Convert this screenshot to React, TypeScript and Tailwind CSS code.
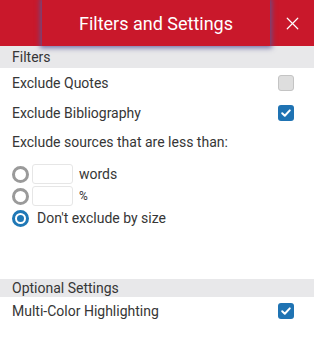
import { X } from 'lucide-react';

function Checkbox({ checked }: { checked: boolean }) {
  if (!checked) {
    return <div className="w-4 h-4 rounded-[3px] bg-[#dedede] border border-[#c4c4c4]" />;
  }
  return (
    <div className="w-4 h-4 rounded-[3px] bg-[#1f73b3] flex items-center justify-center">
      <svg width="12" height="12" viewBox="0 0 12 12" fill="none">
        <path d="M2.2 6.3 L4.8 8.8 L9.8 3.4" stroke="white" strokeWidth="2" strokeLinecap="round" strokeLinejoin="round" />
      </svg>
    </div>
  );
}

function Radio({ checked }: { checked: boolean }) {
  if (checked) {
    return (
      <div className="w-[17px] h-[17px] rounded-full border-[3px] border-[#1f78b6] bg-white flex items-center justify-center shrink-0">
        <div className="w-[7px] h-[7px] rounded-full bg-[#1f78b6]" />
      </div>
    );
  }
  return <div className="w-[17px] h-[17px] rounded-full border-[3px] border-[#9a9a9a] bg-white shrink-0" />;
}

function ToggleRow({ label, checked }: { label: string; checked: boolean }) {
  return (
    <div className="h-[30px] pl-3 pr-5 flex items-center justify-between text-[14px] text-[#363636]">
      <span>{label}</span>
      <Checkbox checked={checked} />
    </div>
  );
}

export default function App() {
  return (
    <div className="w-[314px] h-[356px] bg-white font-['Roboto',sans-serif] overflow-hidden">
      <div className="h-[46px] bg-[#c9182b] flex">
        <div className="w-[42px]" />
        <div className="flex-1 flex items-center justify-center text-white text-[18px] shadow-[0_0_5px_2px_rgba(85,85,150,0.8)] relative z-10">
          Filters and Settings
        </div>
        <div className="w-[44px] flex items-center justify-center text-white">
          <X size={21} strokeWidth={1.4} />
        </div>
      </div>

      <div className="h-[22px] bg-[#e8e8ea] px-3 flex items-center text-[14px] text-[#363636]">Filters</div>

      <ToggleRow label="Exclude Quotes" checked={false} />
      <ToggleRow label="Exclude Bibliography" checked={true} />

      <div className="h-[28px] px-3 flex items-center text-[14px] text-[#363636]">
        Exclude sources that are less than:
      </div>

      <div className="pt-2 px-3 flex flex-col gap-0.5 text-[14px] text-[#363636]">
        <div className="h-5 flex items-center">
          <Radio checked={false} />
          <div className="w-[41px] h-5 ml-[3px] rounded-[3px] border border-[#e6e6e6]" />
          <span className="ml-[6px]">words</span>
        </div>
        <div className="h-5 flex items-center">
          <Radio checked={false} />
          <div className="w-[41px] h-5 ml-[3px] rounded-[3px] border border-[#e6e6e6]" />
          <span className="ml-[6px] text-[12px]">%</span>
        </div>
        <div className="h-5 flex items-center">
          <Radio checked={true} />
          <span className="ml-2">Don't exclude by size</span>
        </div>
      </div>

      <div className="mt-[51px] h-[18px] bg-[#e8e8ea] px-3 flex items-center text-[14px] text-[#363636]">
        Optional Settings
      </div>

      <div className="h-[28px] pl-3 pr-5 flex items-center justify-between text-[14px] text-[#363636]">
        <span>Multi-Color Highlighting</span>
        <Checkbox checked={true} />
      </div>
    </div>
  );
}
